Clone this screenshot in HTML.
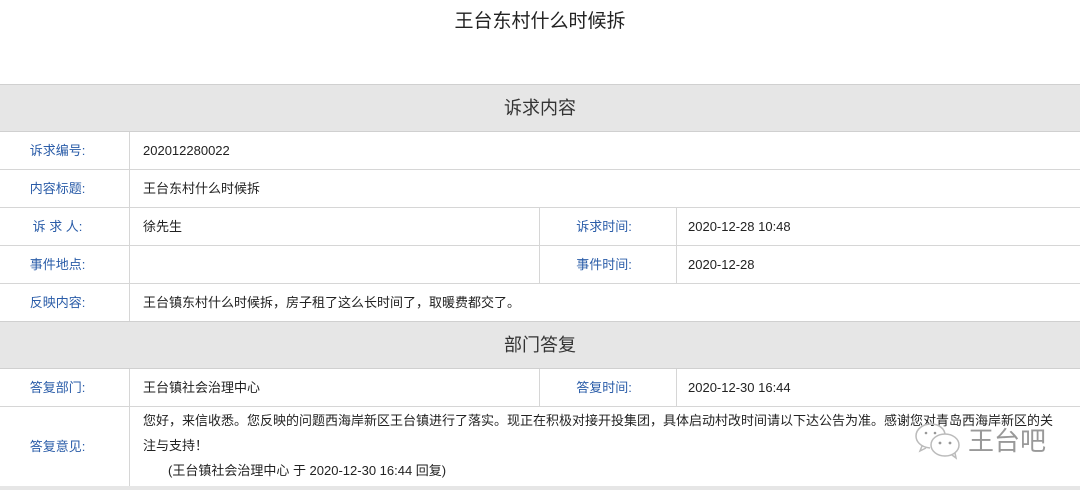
<!DOCTYPE html><html><head><meta charset="utf-8"><style>
body{margin:0;width:1080px;height:490px;background:#fff;font-family:"Liberation Sans","Noto Sans CJK SC",sans-serif;position:relative;overflow:hidden;font-size:13px;color:#222}
.a{position:absolute;box-sizing:border-box;line-height:16px;white-space:nowrap}
.h{background:#e6e6e6;left:0;width:1080px;text-align:center;font-size:18px;color:#333;border-top:1px solid #d0d0d0;border-bottom:1px solid #d0d0d0}
.l{color:#2a5ca8;text-align:center}
.line{position:absolute;background:#d6d6d6}
</style></head><body>
<div class="a" style="left:0;width:1080px;top:10px;line-height:24px;text-align:center;font-size:19px;color:#222">王台东村什么时候拆</div>
<div class="a h" style="top:84px;height:48px;line-height:46px">诉求内容</div>
<div class="a h" style="top:321px;height:48px;line-height:46px">部门答复</div>
<div class="a" style="left:0;width:1080px;top:486px;height:4px;background:#e6e6e6"></div>
<div class="line" style="left:0;width:1080px;top:169px;height:1px"></div>
<div class="line" style="left:0;width:1080px;top:207px;height:1px"></div>
<div class="line" style="left:0;width:1080px;top:245px;height:1px"></div>
<div class="line" style="left:0;width:1080px;top:283px;height:1px"></div>
<div class="line" style="left:0;width:1080px;top:406px;height:1px"></div>
<div class="line" style="left:129px;width:1px;top:132px;height:189px"></div>
<div class="line" style="left:129px;width:1px;top:369px;height:117px"></div>
<div class="line" style="left:539px;width:1px;top:207px;height:76px"></div>
<div class="line" style="left:676px;width:1px;top:207px;height:76px"></div>
<div class="line" style="left:539px;width:1px;top:369px;height:37px"></div>
<div class="line" style="left:676px;width:1px;top:369px;height:37px"></div>
<div class="a l" style="left:0;width:115px;top:143px">诉求编号:</div>
<div class="a l" style="left:0;width:115px;top:181px">内容标题:</div>
<div class="a l" style="left:0;width:115px;top:219px">诉 求 人:</div>
<div class="a l" style="left:0;width:115px;top:257px">事件地点:</div>
<div class="a l" style="left:0;width:115px;top:295px">反映内容:</div>
<div class="a l" style="left:0;width:115px;top:380px">答复部门:</div>
<div class="a l" style="left:0;width:115px;top:439px">答复意见:</div>
<div class="a l" style="left:539px;width:130px;top:219px">诉求时间:</div>
<div class="a l" style="left:539px;width:130px;top:257px">事件时间:</div>
<div class="a l" style="left:539px;width:130px;top:380px">答复时间:</div>
<div class="a" style="left:143px;top:143px">202012280022</div>
<div class="a" style="left:143px;top:181px">王台东村什么时候拆</div>
<div class="a" style="left:143px;top:219px">徐先生</div>
<div class="a" style="left:143px;top:295px">王台镇东村什么时候拆，房子租了这么长时间了，取暖费都交了。</div>
<div class="a" style="left:143px;top:380px">王台镇社会治理中心</div>
<div class="a" style="left:688px;top:219px">2020-12-28 10:48</div>
<div class="a" style="left:688px;top:257px">2020-12-28</div>
<div class="a" style="left:688px;top:380px">2020-12-30 16:44</div>
<div class="a" style="left:143px;top:408px;width:916px;line-height:25px;white-space:normal">您好，来信收悉。您反映的问题西海岸新区王台镇进行了落实。现正在积极对接开投集团，具体启动村改时间请以下达公告为准。感谢您对青岛西海岸新区的关注与支持！</div>
<div class="a" style="left:168px;top:463px">(王台镇社会治理中心 于 2020-12-30 16:44 回复)</div>
<svg class="a" style="left:914px;top:422px" width="50" height="40" viewBox="0 0 50 40" fill="none" stroke="#bbb" stroke-width="1.5">
<path d="M16 26 C6 25 2 19 2 14 C2 7 9 2 17 2 C25 2 31 7 31 13"/><path d="M8 24 L6 29 L12 26"/>
<ellipse cx="31" cy="23" rx="14" ry="11" fill="#fff"/><path d="M38 33 L42 36 L41 31"/>
<circle cx="26" cy="21" r="1.4" fill="#999" stroke="none"/><circle cx="36" cy="21" r="1.4" fill="#999" stroke="none"/>
<circle cx="12" cy="11" r="1.3" fill="#999" stroke="none"/><circle cx="21" cy="11" r="1.3" fill="#999" stroke="none"/>
</svg>
<div class="a" style="left:968px;top:426px;line-height:30px;font-size:26px;color:#999">王台吧</div>
</body></html>
